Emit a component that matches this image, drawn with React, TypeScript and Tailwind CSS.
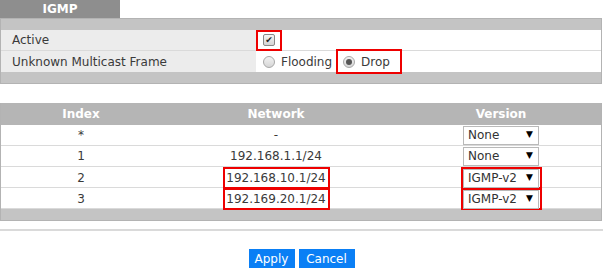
import React from 'react';

const rows = [
  { index: '*', network: '-', version: 'None', hl: false },
  { index: '1', network: '192.168.1.1/24', version: 'None', hl: false },
  { index: '2', network: '192.168.10.1/24', version: 'IGMP-v2', hl: true },
  { index: '3', network: '192.169.20.1/24', version: 'IGMP-v2', hl: true },
];

const Select: React.FC<{ value: string }> = ({ value }) => (
  <div className="w-[76px] h-[19px] border border-[#b9b9b9] bg-white flex items-center justify-between pl-[4px] pr-[5px] text-[12px] text-[#333]">
    <span>{value}</span>
    <span className="text-[9px] text-black">▼</span>
  </div>
);

const App: React.FC = () => {
  return (
    <div className="w-[603px] h-[270px] bg-white font-['DejaVu_Sans',sans-serif] text-[12px] text-[#3a3a3a]">
      {/* tab */}
      <div className="w-[120px] h-[18px] bg-[#8e8e8e] text-white font-bold text-[12px] flex items-center justify-center">IGMP</div>

      {/* settings box */}
      <div className="w-[602px] border border-[#b3b3b3]">
        <div className="h-[11px] bg-[#c4c4c4]" />
        <div className="flex h-[21px] border-b border-[#dadada]">
          <div className="w-[255px] bg-[#ececec] pl-[11px] flex items-center">Active</div>
          <div className="flex-1 flex items-center pl-[4px]">
            <div className="w-[26px] h-[21px] border-2 border-[#ee0000] flex items-center justify-center -ml-[4px]">
              <div className="w-[12px] h-[12px] rounded-[2px] border border-[#888] bg-gradient-to-b from-[#f4f4f4] to-[#d4d4d4] flex items-center justify-center text-[9px] leading-none text-[#222]">✔</div>
            </div>
          </div>
        </div>
        <div className="flex h-[21px]">
          <div className="w-[255px] bg-[#ececec] pl-[11px] flex items-center">Unknown Multicast Frame</div>
          <div className="flex-1 flex items-center">
            <div className="flex items-center pl-[7px] gap-[6px]">
              <span className="w-[12px] h-[12px] rounded-full border border-[#a8a8a8] bg-gradient-to-b from-[#f2f2f2] to-[#d6d6d6]" />
              <span>Flooding</span>
            </div>
            <div className="ml-[4px] h-[25px] w-[66px] border-2 border-[#ee0000] flex items-center pl-[5px] gap-[6px]">
              <span className="w-[12px] h-[12px] rounded-full border border-[#a8a8a8] bg-gradient-to-b from-[#f2f2f2] to-[#d6d6d6] flex items-center justify-center">
                <span className="w-[6px] h-[6px] rounded-full bg-[#555]" />
              </span>
              <span>Drop</span>
            </div>
          </div>
        </div>
        <div className="h-[11px] bg-[#c4c4c4]" />
      </div>

      {/* table */}
      <div className="mt-[19px] w-[602px] border-l border-r border-b border-[#b3b3b3]">
        <div className="grid grid-cols-[160px_230px_1fr] h-[22px] bg-[#b5b5b5] text-white font-bold items-center text-center">
          <div>Index</div>
          <div>Network</div>
          <div className="pl-[10px]">Version</div>
        </div>
        {rows.map((r) => (
          <div key={r.index} className="grid grid-cols-[160px_230px_1fr] h-[21px] border-b border-[#dadada] items-center text-center">
            <div>{r.index}</div>
            <div className="flex justify-center">
              {r.hl ? (
                <div className="w-[107px] h-[22px] border-2 border-[#ee0000] flex items-center justify-center">{r.network}</div>
              ) : (
                <span>{r.network}</span>
              )}
            </div>
            <div className="flex justify-center pl-[10px]">
              {r.hl ? (
                <div className="w-[81px] h-[22px] border-2 border-[#ee0000] flex items-center justify-center">
                  <Select value={r.version} />
                </div>
              ) : (
                <Select value={r.version} />
              )}
            </div>
          </div>
        ))}
        <div className="h-[11px] bg-[#c4c4c4]" />
      </div>

      <div className="mt-[8px] h-[2px] bg-[#dadada]" />

      <div className="mt-[18px] flex justify-center gap-[4px] pl-[0px]">
        <button className="w-[46px] h-[19px] bg-[#0a7ff5] text-white text-[12px] flex items-center justify-center">Apply</button>
        <button className="w-[56px] h-[19px] bg-[#0a7ff5] text-white text-[12px] flex items-center justify-center">Cancel</button>
      </div>
    </div>
  );
};

export default App;
